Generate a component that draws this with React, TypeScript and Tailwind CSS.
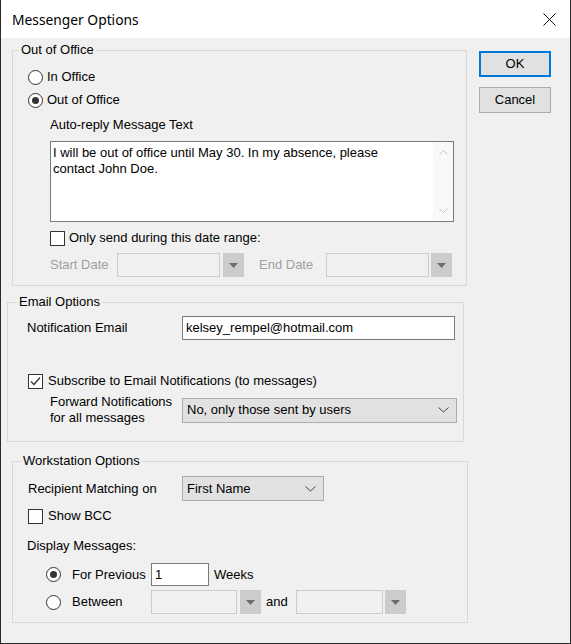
import React from "react";

const font = { fontFamily: '"Liberation Sans", Arial, sans-serif' };

function Radio({ checked }: { checked?: boolean }) {
  return (
    <span className="w-[15px] h-[15px] rounded-full border border-[#333333] bg-white flex items-center justify-center shrink-0">
      {checked && <span className="w-[7px] h-[7px] rounded-full bg-[#333333]" />}
    </span>
  );
}

function Check({ checked }: { checked?: boolean }) {
  return (
    <span className="w-[15px] h-[15px] border border-[#333333] bg-white flex items-center justify-center shrink-0">
      {checked && (
        <svg width="13" height="13" viewBox="0 0 13 13">
          <polyline points="2,6.5 5,9.5 11,2.5" fill="none" stroke="#333333" strokeWidth="1.3" />
        </svg>
      )}
    </span>
  );
}

function DisabledCombo({ w, gap }: { w: string; gap: string }) {
  return (
    <div className="flex h-full items-stretch">
      <div className={`${w} h-full border border-[#cccccc] bg-[#f0f0f0]`} />
      <div className={`${gap} w-[21px] h-full bg-[#cccccc] flex items-center justify-center`}>
        <svg width="9" height="5" viewBox="0 0 9 5">
          <polygon points="0,0 9,0 4.5,5" fill="#6d6d6d" />
        </svg>
      </div>
    </div>
  );
}

function Chevron() {
  return (
    <svg width="11" height="6" viewBox="0 0 11 6">
      <polyline points="0.5,0.5 5.5,5 10.5,0.5" fill="none" stroke="#444444" strokeWidth="1" />
    </svg>
  );
}

export default function App() {
  return (
    <div
      className="w-[571px] h-[644px] bg-[#f0f0f0] border-l border-r border-b border-[#2b2b2b] flex flex-col text-[13px] leading-[16px] text-black overflow-hidden"
      style={font}
    >
      {/* Title bar */}
      <div className="h-[38px] bg-white flex items-center justify-between pl-[11px] pr-[14px] shrink-0">
        <span className="text-[13.8px] pt-[1px]" style={{ fontFamily: '"Noto Sans", "Open Sans", sans-serif' }}>
          Messenger Options
        </span>
        <svg width="13" height="13" viewBox="0 0 13 13">
          <line x1="0.5" y1="0.5" x2="12.5" y2="12.5" stroke="#111" strokeWidth="1" />
          <line x1="12.5" y1="0.5" x2="0.5" y2="12.5" stroke="#111" strokeWidth="1" />
        </svg>
      </div>

      {/* Body */}
      <div className="flex flex-1">
        <div className="w-[470px] flex flex-col shrink-0">
          {/* Out of Office */}
          <fieldset className="ml-[11px] mt-[4px] w-[455px] border border-[#d9d9d9] pb-[8px]">
            <legend className="ml-[6px] px-[2px] leading-[16px]">Out of Office</legend>
            <div className="mt-[11px] h-[16px] flex items-center ml-[15px]">
              <Radio />
              <span className="ml-[4px]">In Office</span>
            </div>
            <div className="mt-[7px] h-[16px] flex items-center ml-[15px]">
              <Radio checked />
              <span className="ml-[4px]">Out of Office</span>
            </div>
            <div className="mt-[9px] h-[16px] ml-[37px]">Auto-reply Message Text</div>
            <div className="mt-[8px] ml-[37px] w-[404px] h-[81px] border border-[#7a7a7a] bg-white flex">
              <div className="flex-1 pl-[2px] pt-[3px]">
                I will be out of office until May 30. In my absence, please
                <br />
                contact John Doe.
              </div>
              <div className="w-[20px] bg-[#f9f9f9] flex flex-col items-center justify-between py-[8px]">
                <svg width="9" height="5" viewBox="0 0 9 5">
                  <polyline points="0.5,4.5 4.5,0.5 8.5,4.5" fill="none" stroke="#c4c4c4" strokeWidth="1" />
                </svg>
                <svg width="9" height="5" viewBox="0 0 9 5">
                  <polyline points="0.5,0.5 4.5,4.5 8.5,0.5" fill="none" stroke="#c4c4c4" strokeWidth="1" />
                </svg>
              </div>
            </div>
            <div className="mt-[8px] h-[16px] flex items-center ml-[37px]">
              <Check />
              <span className="ml-[4px]">Only send during this date range:</span>
            </div>
            <div className="mt-[7px] h-[24px] flex items-center ml-[37px] text-[#a0a0a0]">
              <span className="w-[67px]">Start Date</span>
              <DisabledCombo w="w-[103px]" gap="ml-[3px]" />
              <span className="ml-[15px] w-[67px]">End Date</span>
              <DisabledCombo w="w-[103px]" gap="ml-[2px]" />
            </div>
          </fieldset>

          {/* Email Options */}
          <fieldset className="ml-[6px] mt-[8px] w-[457px] border border-[#d9d9d9] pb-[15px]">
            <legend className="ml-[9px] px-[2px] leading-[16px]">Email Options</legend>
            <div className="mt-[6px] h-[24px] flex items-center ml-[19px]">
              <span className="w-[155px]">Notification Email</span>
              <div className="w-[273px] h-[24px] border border-[#7a7a7a] bg-white flex items-center pl-[3px]">
                kelsey_rempel@hotmail.com
              </div>
            </div>
            <div className="mt-[33px] h-[16px] flex items-center ml-[20px]">
              <Check checked />
              <span className="ml-[5px]">Subscribe to Email Notifications (to messages)</span>
            </div>
            <div className="mt-[5px] h-[32px] flex items-center ml-[42px]">
              <span className="w-[132px] leading-[16px]">
                Forward Notifications
                <br />
                for all messages
              </span>
              <div className="w-[275px] h-[25px] border border-[#adadad] bg-[#e1e1e1] flex items-center justify-between pl-[4px] pr-[7px]">
                <span>No, only those sent by users</span>
                <Chevron />
              </div>
            </div>
          </fieldset>

          {/* Workstation Options */}
          <fieldset className="ml-[11px] mt-[11px] w-[456px] border border-[#d9d9d9] pb-[8px]">
            <legend className="ml-[8px] px-[2px] leading-[16px]">Workstation Options</legend>
            <div className="mt-[7px] h-[25px] flex items-center ml-[15px]">
              <span className="w-[154px]">Recipient Matching on</span>
              <div className="w-[142px] h-[25px] border border-[#adadad] bg-[#e1e1e1] flex items-center justify-between pl-[4px] pr-[7px]">
                <span>First Name</span>
                <Chevron />
              </div>
            </div>
            <div className="mt-[7px] h-[16px] flex items-center ml-[15px]">
              <Check />
              <span className="ml-[5px]">Show BCC</span>
            </div>
            <div className="mt-[14px] h-[16px] ml-[14px]">Display Messages:</div>
            <div className="mt-[9px] h-[23px] flex items-center ml-[33px]">
              <Radio checked />
              <span className="ml-[11px] w-[79px]">For Previous</span>
              <div className="w-[58px] h-[23px] border border-[#7a7a7a] bg-white flex items-center pl-[3px]">1</div>
              <span className="ml-[5px]">Weeks</span>
            </div>
            <div className="mt-[4px] h-[24px] flex items-center ml-[33px]">
              <Radio />
              <span className="ml-[11px] w-[79px]">Between</span>
              <DisabledCombo w="w-[86px]" gap="ml-[3px]" />
              <span className="ml-[5px] w-[30px]">and</span>
              <DisabledCombo w="w-[87px]" gap="ml-[2px]" />
            </div>
          </fieldset>
        </div>

        {/* Buttons */}
        <div className="flex flex-col pl-[8px] pt-[13px]">
          <button className="w-[72px] h-[26px] border-2 border-[#0078d7] bg-[#e1e1e1] flex items-center justify-center">
            OK
          </button>
          <button className="mt-[10px] w-[72px] h-[26px] border border-[#adadad] bg-[#e1e1e1] flex items-center justify-center">
            Cancel
          </button>
        </div>
      </div>
    </div>
  );
}
